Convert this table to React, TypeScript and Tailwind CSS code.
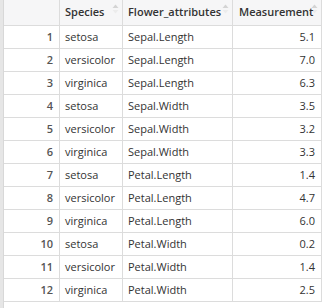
import React from "react";

const rows: [string, string, string][] = [
  ["setosa", "Sepal.Length", "5.1"],
  ["versicolor", "Sepal.Length", "7.0"],
  ["virginica", "Sepal.Length", "6.3"],
  ["setosa", "Sepal.Width", "3.5"],
  ["versicolor", "Sepal.Width", "3.2"],
  ["virginica", "Sepal.Width", "3.3"],
  ["setosa", "Petal.Length", "1.4"],
  ["versicolor", "Petal.Length", "4.7"],
  ["virginica", "Petal.Length", "6.0"],
  ["setosa", "Petal.Width", "0.2"],
  ["versicolor", "Petal.Width", "1.4"],
  ["virginica", "Petal.Width", "2.5"],
];

function SortIcon() {
  return (
    <svg width="7" height="10" viewBox="0 0 7 10" className="absolute right-[3px] top-[4px]">
      <path d="M3.5 0.5 L6.5 4 L0.5 4 Z" fill="#d4d4d4" />
      <path d="M3.5 9.5 L6.5 6 L0.5 6 Z" fill="#ececec" />
    </svg>
  );
}

export default function App() {
  return (
    <div
      className="flex w-[327px] h-[308px] bg-white text-[11px] text-[#333]"
      style={{ fontFamily: '"Open Sans", sans-serif' }}
    >
      <div className="w-[4px] h-full bg-[#e6e6e6] border-r border-[#d8d8d8]" />
      <div className="flex flex-col">
        <div className="grid grid-cols-[56px_63px_110px_89px] h-[26px] bg-[#f6f6f7] font-semibold text-[#333]">
          <div className="border-r border-b border-[#dcdcdc]" />
          <div className="relative border-r border-b border-[#dcdcdc] pl-[5px] flex items-center whitespace-nowrap">
            Species
            <SortIcon />
          </div>
          <div className="relative border-r border-b border-[#dcdcdc] pl-[5px] flex items-center whitespace-nowrap">
            Flower_attributes
            <SortIcon />
          </div>
          <div className="relative border-r border-b border-[#dcdcdc] pl-[6px] flex items-center whitespace-nowrap">
            <span className="relative z-10">Measurement</span>
            <SortIcon />
          </div>
        </div>
        {rows.map((r, i) => (
          <div key={i} className="grid grid-cols-[56px_63px_110px_89px] h-[23px]">
            <div className="border-r border-b border-[#dcdcdc] pr-[6px] flex items-center justify-end font-semibold text-[#555]">
              {i + 1}
            </div>
            <div className="border-r border-b border-[#dcdcdc] pl-[5px] flex items-center whitespace-nowrap">
              {r[0]}
            </div>
            <div className="border-r border-b border-[#dcdcdc] pl-[5px] flex items-center">
              {r[1]}
            </div>
            <div className="border-r border-b border-[#dcdcdc] pr-[6px] flex items-center justify-end">
              {r[2]}
            </div>
          </div>
        ))}
      </div>
    </div>
  );
}
